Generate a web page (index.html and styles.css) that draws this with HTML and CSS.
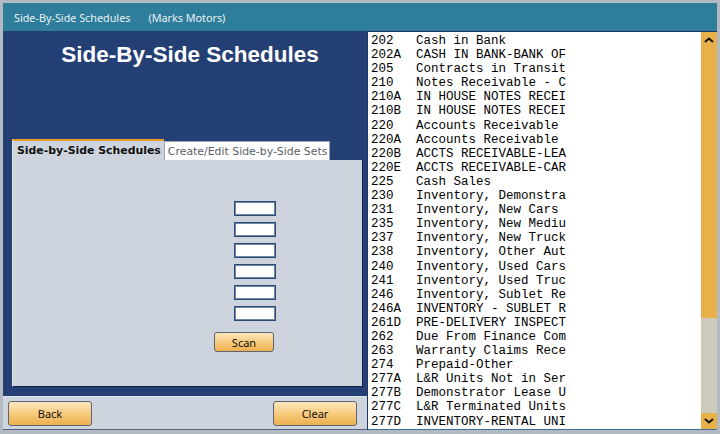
FILE: index.html
```html
<!DOCTYPE html>
<html>
<head>
<meta charset="utf-8">
<link rel="stylesheet" href="styles.css">
</head>
<body>
<div class="window">
  <div class="titlebar">
    <span class="app">Side-By-Side Schedules</span>
    <span class="company">(Marks Motors)</span>
  </div>
  <div class="main">
    <div class="left">
      <div class="navy">
        <h1 class="heading">Side-By-Side Schedules</h1>
        <div class="tabs">
          <div class="tabstrip">
            <div class="tab active">Side-by-Side Schedules</div>
            <div class="tab">Create/Edit Side-by-Side Sets</div>
          </div>
          <div class="tabbody">
            <div class="fields">
              <input class="field" type="text">
              <input class="field" type="text">
              <input class="field" type="text">
              <input class="field" type="text">
              <input class="field" type="text">
              <input class="field" type="text">
              <button class="btn scan">Scan</button>
            </div>
          </div>
        </div>
      </div>
      <div class="footer">
        <button class="btn wide">Back</button>
        <button class="btn wide">Clear</button>
      </div>
    </div>
    <div class="right">
      <div class="list">
        <div class="row"><span class="code">202</span><span>Cash in Bank</span></div>
        <div class="row"><span class="code">202A</span><span>CASH IN BANK-BANK OF</span></div>
        <div class="row"><span class="code">205</span><span>Contracts in Transit</span></div>
        <div class="row"><span class="code">210</span><span>Notes Receivable - C</span></div>
        <div class="row"><span class="code">210A</span><span>IN HOUSE NOTES RECEI</span></div>
        <div class="row"><span class="code">210B</span><span>IN HOUSE NOTES RECEI</span></div>
        <div class="row"><span class="code">220</span><span>Accounts Receivable</span></div>
        <div class="row"><span class="code">220A</span><span>Accounts Receivable</span></div>
        <div class="row"><span class="code">220B</span><span>ACCTS RECEIVABLE-LEA</span></div>
        <div class="row"><span class="code">220E</span><span>ACCTS RECEIVABLE-CAR</span></div>
        <div class="row"><span class="code">225</span><span>Cash Sales</span></div>
        <div class="row"><span class="code">230</span><span>Inventory, Demonstra</span></div>
        <div class="row"><span class="code">231</span><span>Inventory, New Cars</span></div>
        <div class="row"><span class="code">235</span><span>Inventory, New Mediu</span></div>
        <div class="row"><span class="code">237</span><span>Inventory, New Truck</span></div>
        <div class="row"><span class="code">238</span><span>Inventory, Other Aut</span></div>
        <div class="row"><span class="code">240</span><span>Inventory, Used Cars</span></div>
        <div class="row"><span class="code">241</span><span>Inventory, Used Truc</span></div>
        <div class="row"><span class="code">246</span><span>Inventory, Sublet Re</span></div>
        <div class="row"><span class="code">246A</span><span>INVENTORY - SUBLET R</span></div>
        <div class="row"><span class="code">261D</span><span>PRE-DELIVERY INSPECT</span></div>
        <div class="row"><span class="code">262</span><span>Due From Finance Com</span></div>
        <div class="row"><span class="code">263</span><span>Warranty Claims Rece</span></div>
        <div class="row"><span class="code">274</span><span>Prepaid-Other</span></div>
        <div class="row"><span class="code">277A</span><span>L&amp;R Units Not in Ser</span></div>
        <div class="row"><span class="code">277B</span><span>Demonstrator Lease U</span></div>
        <div class="row"><span class="code">277C</span><span>L&amp;R Terminated Units</span></div>
        <div class="row"><span class="code">277D</span><span>INVENTORY-RENTAL UNI</span></div>
      </div>
      <div class="scrollbar">
        <div class="sb-btn"><svg width="10" height="6" viewBox="0 0 10 6"><polyline points="1,5 5,1.5 9,5" fill="none" stroke="#111" stroke-width="2"/></svg></div>
        <div class="sb-thumb"></div>
        <div class="sb-track"></div>
        <div class="sb-btn"><svg width="10" height="6" viewBox="0 0 10 6"><polyline points="1,1 5,4.5 9,1" fill="none" stroke="#111" stroke-width="2"/></svg></div>
      </div>
    </div>
  </div>
</div>
</body>
</html>
```
FILE: styles.css
```css
html, body {
  margin: 0;
  padding: 0;
}
body {
  width: 720px;
  height: 434px;
  overflow: hidden;
  background: #b4bac2;
}
.window {
  box-sizing: border-box;
  width: 720px;
  height: 434px;
  padding: 3px 3px 4px 3px;
  display: flex;
  flex-direction: column;
  background: #b4bac2;
}
.titlebar {
  height: 28px;
  flex: none;
  background: #2e7d9a;
  display: flex;
  align-items: center;
  padding-left: 11px;
  gap: 18px;
  color: #e9f1f4;
  font-family: "Noto Sans", "Open Sans", sans-serif;
  font-size: 10.8px;
}
.main {
  flex: 1;
  display: flex;
  min-height: 0;
}
.left {
  width: 364px;
  flex: none;
  display: flex;
  flex-direction: column;
}
.navy {
  flex: 1;
  background: #233f74;
  padding-top: 11px;
  display: flex;
  flex-direction: column;
}
.heading {
  margin: 0;
  font-family: "Liberation Sans", Arial, sans-serif;
  font-weight: bold;
  font-size: 22.5px;
  line-height: 26px;
  color: #ffffff;
  text-align: center;
  padding-left: 10px;
}
.tabs {
  margin: 71px 4px 0 9px;
  display: flex;
  flex-direction: column;
}
.tabstrip {
  display: flex;
  align-items: flex-end;
  height: 21px;
}
.tab {
  box-sizing: border-box;
  height: 19px;
  padding: 0 2px 0 3px;
  display: flex;
  align-items: center;
  font-family: "DejaVu Sans", Verdana, sans-serif;
  font-size: 10.9px;
  color: #5a5f66;
  background: #ffffff;
  border: 1px solid #9aa6b4;
  border-bottom: none;
}
.tab.active {
  height: 21px;
  background: #cdd4dd;
  color: #111;
  font-weight: bold;
  border: none;
  border-top: 2px solid #e49a2a;
  border-left: 1px solid #e0e5ea;
  padding: 0 3px 0 4px;
}
.tabbody {
  box-sizing: border-box;
  height: 227px;
  background: #cdd4dd;
  border-left: 1px solid #e0e5ea;
  border-right: 1px solid #0f2247;
  border-bottom: 1px solid #0f2247;
  padding-top: 41px;
}
.fields {
  width: 263px;
  display: flex;
  flex-direction: column;
  align-items: flex-end;
  gap: 6px;
}
.field {
  box-sizing: border-box;
  width: 42px;
  height: 15px;
  margin: 0;
  padding: 0;
  border: 1px solid #2f4a72;
  box-shadow: inset 0 0 0 1px #6f86a6;
  background: #ffffff;
}
.btn {
  box-sizing: border-box;
  margin: 0;
  padding: 0;
  border: 1px solid #5b6573;
  border-radius: 3px;
  background: linear-gradient(#fde7bd, #f5c87a 55%, #eeb04e);
  font-family: "Noto Sans", "Open Sans", sans-serif;
  font-size: 11px;
  color: #111;
}
.scan {
  width: 60px;
  height: 20px;
  margin-top: 5px;
  margin-right: 2px;
}
.footer {
  box-sizing: border-box;
  height: 34px;
  flex: none;
  background: #cdd4dd;
  border-top: 1px solid #e3e7ec;
  border-bottom: 1px solid #4f6382;
  display: flex;
  justify-content: space-between;
  align-items: flex-start;
  padding: 4px 10px 0 5px;
}
.wide {
  width: 84px;
  height: 25px;
}
.right {
  flex: 1;
  display: flex;
  border-top: 1px solid #1c3766;
  border-left: 1px solid #1c3766;
  border-bottom: 1px solid #3d6d98;
  min-width: 0;
}
.list {
  flex: 1;
  background: #ffffff;
  padding: 2px 0 0 3px;
  overflow: hidden;
  font-family: "Liberation Mono", "DejaVu Sans Mono", monospace;
  font-size: 12.5px;
  line-height: 14.1px;
  color: #000000;
}
.row {
  display: flex;
  white-space: pre;
}
.code {
  width: 45px;
  flex: none;
}
.scrollbar {
  width: 16px;
  flex: none;
  display: flex;
  flex-direction: column;
  background: #cdcabb;
}
.sb-btn {
  height: 16px;
  flex: none;
  background: #e8b04a;
  display: flex;
  align-items: center;
  justify-content: center;
}
.sb-thumb {
  height: 270px;
  flex: none;
  background: #e8b04a;
}
.sb-track {
  flex: 1;
  background: #cdcabb;
}
```
